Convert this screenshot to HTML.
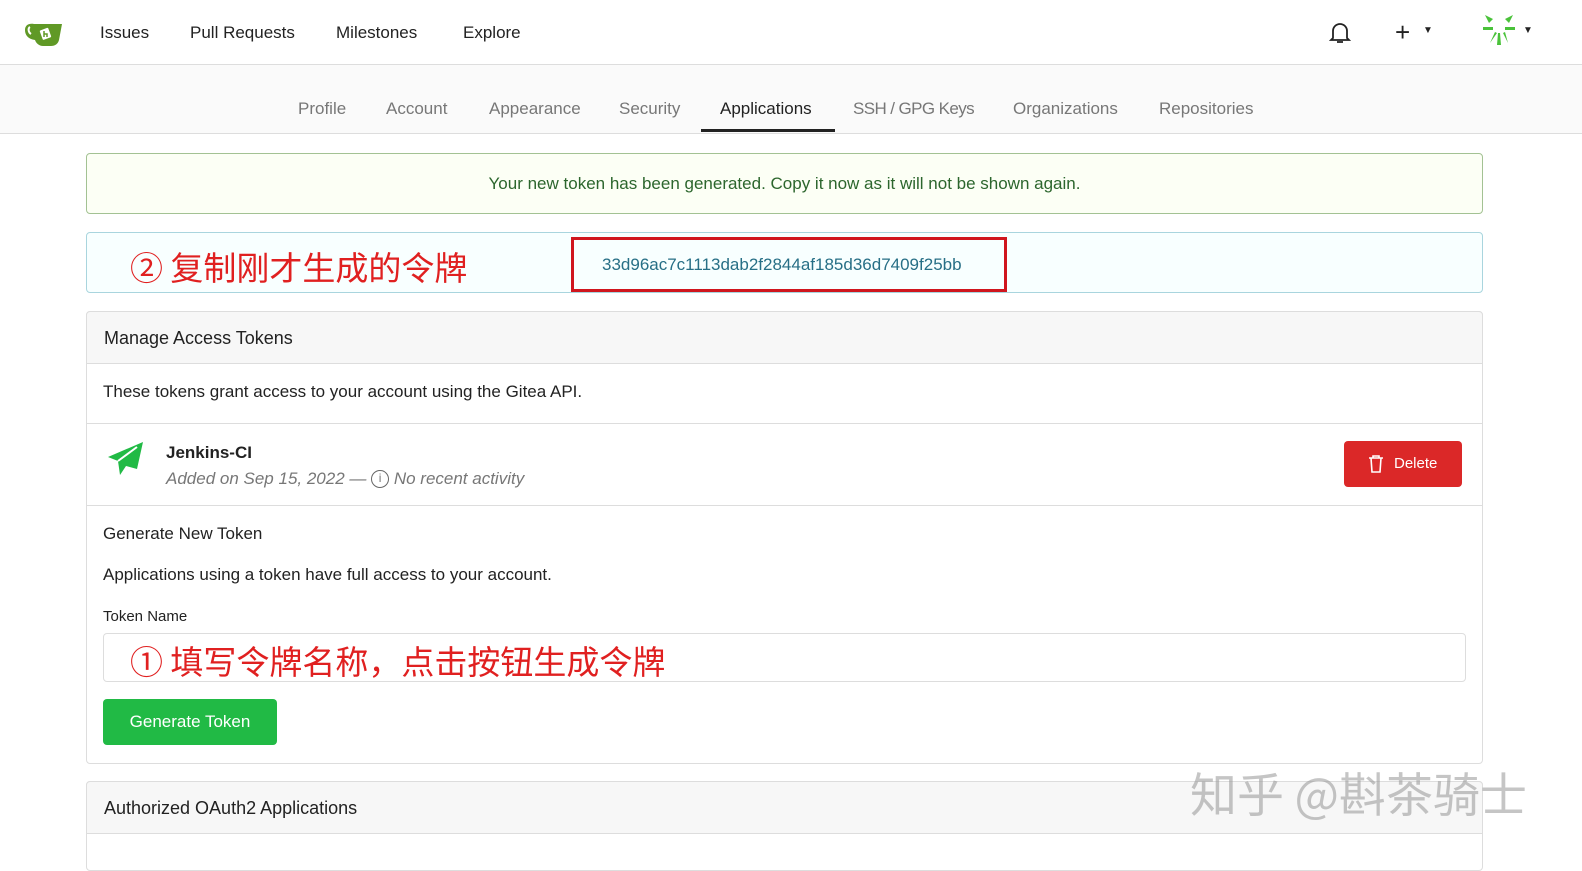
<!DOCTYPE html>
<html><head><meta charset="utf-8"><style>
*{box-sizing:border-box;margin:0;padding:0}
body{width:1582px;height:862px;overflow:hidden;background:#fff;font-family:"Liberation Sans","Noto Sans CJK SC",sans-serif;color:#222;position:relative;font-size:17px}
.a{position:absolute}
.nav{top:0;left:0;width:1582px;height:65px;border-bottom:1px solid #ddd;background:#fff}
.nav span{position:absolute;top:23px;font-size:17px;color:#222}
.sub{top:65px;left:0;width:1582px;height:69px;background:#fafafa;border-bottom:1px solid #ddd}
.sub span{position:absolute;top:34px;font-size:17px;color:#777;white-space:nowrap}
.box{left:86px;width:1397px}
</style></head><body>
<div class="a nav">
<svg class="a" style="left:24px;top:18px" width="40" height="30" viewBox="0 0 40 30"><path d="M10 6h28l-3 16c-1 4-4 6-8 6h-8c-4 0-7-3-8-6C4 21 1 17 1 12 1 7 5 5 10 6z" fill="#609926"/><path d="M6 9c-2 1-2 5 1 7" stroke="#fff" stroke-width="2" fill="none"/><rect x="17" y="11" width="9" height="10" rx="1" transform="rotate(-20 21 16)" fill="#fff"/><path d="M20 13v6M20 16h3v3" stroke="#609926" stroke-width="1.5" fill="none"/></svg>
<span style="left:100px">Issues</span><span style="left:190px">Pull Requests</span><span style="left:336px">Milestones</span><span style="left:463px">Explore</span>
<svg class="a" style="left:1329px;top:21px" width="22" height="24" viewBox="0 0 22 24"><path d="M4 17V10a7 7 0 0 1 14 0v7l2 2H2z M8 21h6" stroke="#222" stroke-width="1.8" fill="none"/></svg>
<span style="left:1395px;top:17px;font-size:26px">+</span><span style="left:1423px;top:25px;font-size:10px">▼</span>
<svg class="a" style="left:1482px;top:12px" width="34" height="34" viewBox="0 0 34 34" fill="#4ac23a"><path d="M3 3l8 4-4 4z M31 3l-8 4 4 4z M1 15h10v3H1z M23 15h10v3H23z M8 31l5-11 2 1z M15 33l1-12h2l1 12z M26 31l-5-10 2-1z"/></svg>
<span style="left:1523px;top:25px;font-size:10px">▼</span>
</div>
<div class="a sub">
<span style="left:298px">Profile</span><span style="left:386px">Account</span><span style="left:489px">Appearance</span><span style="left:619px">Security</span><span style="left:720px;color:#222">Applications</span><span style="left:853px;letter-spacing:-0.6px">SSH / GPG Keys</span><span style="left:1013px">Organizations</span><span style="left:1159px">Repositories</span>
<div class="a" style="left:701px;top:64px;width:134px;height:3px;background:#222"></div>
</div>
<div class="a box" style="top:153px;height:61px;background:#fcfff5;border:1px solid #a3c293;border-radius:4px;color:#2c662d;text-align:center;line-height:59px;font-size:17px">Your new token has been generated. Copy it now as it will not be shown again.</div>
<div class="a box" style="top:232px;height:61px;background:#f8ffff;border:1px solid #a9d5de;border-radius:4px"></div>
<div class="a" style="left:130px;top:245px;color:#e02020;font-size:33px;font-family:'Noto Sans CJK SC',sans-serif;line-height:42px;white-space:nowrap">② 复制刚才生成的令牌</div>
<div class="a" style="left:571px;top:237px;width:436px;height:55px;border:3px solid #d0161e;color:#276f86;font-size:17px;line-height:49px;padding-left:28px">33d96ac7c1113dab2f2844af185d36d7409f25bb</div>
<div class="a box" style="top:311px;height:453px;border:1px solid #ddd;border-radius:4px"></div>
<div class="a box" style="top:311px;height:53px;background:#f7f7f7;border:1px solid #ddd;border-radius:4px 4px 0 0;padding:16px 17px;font-size:18px">Manage Access Tokens</div>
<div class="a" style="left:103px;top:382px">These tokens grant access to your account using the Gitea API.</div>
<div class="a box" style="top:423px;height:1px;background:#ddd"></div>
<svg class="a" style="left:107px;top:441px" width="38" height="36" viewBox="0 0 38 36"><path d="M36 1L1 16l10 4 2 14 6-9 11 3z" fill="#21ba45"/><path d="M11 20L30 6" stroke="#fff" stroke-width="2"/></svg>
<div class="a" style="left:166px;top:443px;font-weight:bold;font-size:17px">Jenkins-CI</div>
<div class="a" style="left:166px;top:469px;font-style:italic;color:#777;font-size:17px">Added on Sep 15, 2022 — <span style="display:inline-block;width:18px;height:18px;border:1.5px solid #666;border-radius:50%;font-style:normal;font-size:12px;text-align:center;line-height:15px;vertical-align:2px">i</span> No recent activity</div>
<div class="a" style="left:1344px;top:441px;width:118px;height:46px;background:#db2828;border-radius:4px;color:#fff;font-size:15px;line-height:46px;padding-left:50px">Delete</div>
<svg class="a" style="left:1368px;top:455px" width="16" height="18" viewBox="0 0 16 18"><path d="M1 3h14M5 3V1h6v2M3 3l1 14h8l1-14" stroke="#fff" stroke-width="1.6" fill="none"/></svg>
<div class="a box" style="top:505px;height:1px;background:#ddd"></div>
<div class="a" style="left:103px;top:524px">Generate New Token</div>
<div class="a" style="left:103px;top:565px">Applications using a token have full access to your account.</div>
<div class="a" style="left:103px;top:608px;font-size:15px">Token Name</div>
<div class="a" style="left:103px;top:633px;width:1363px;height:49px;border:1px solid #ddd;border-radius:4px"></div>
<div class="a" style="left:130px;top:639px;color:#e02020;font-size:33px;font-family:'Noto Sans CJK SC',sans-serif;line-height:42px;white-space:nowrap">① 填写令牌名称，点击按钮生成令牌</div>
<div class="a" style="left:103px;top:699px;width:174px;height:46px;background:#21ba45;border-radius:4px;color:#fff;font-size:17px;line-height:46px;text-align:center">Generate Token</div>
<div class="a box" style="top:781px;height:90px;border:1px solid #ddd;border-radius:4px"></div>
<div class="a box" style="top:781px;height:53px;background:#f7f7f7;border:1px solid #ddd;border-radius:4px 4px 0 0;padding:16px 17px;font-size:18px">Authorized OAuth2 Applications</div>
<div class="a" style="left:1190px;top:757px;font-size:47px;color:rgba(150,150,150,.55);font-family:'Noto Sans CJK SC',sans-serif;white-space:nowrap">知乎 @斟茶骑士</div>
</body></html>
